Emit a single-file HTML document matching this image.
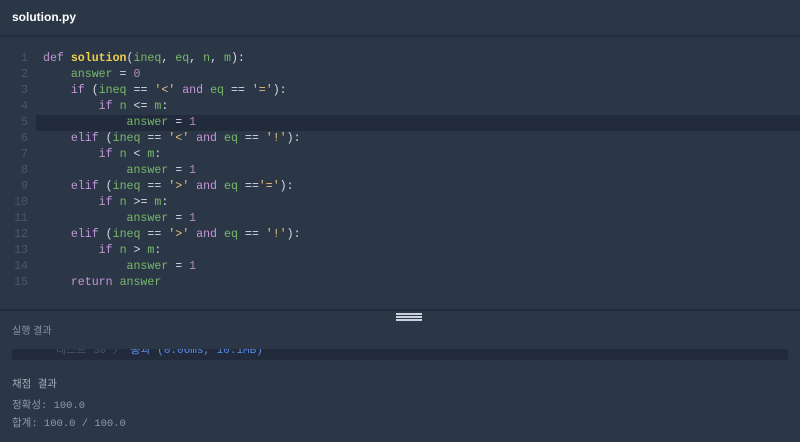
<!DOCTYPE html>
<html><head><meta charset="utf-8"><style>
body{margin:0;width:800px;height:442px;background:#2b3647;overflow:hidden;position:relative;font-family:"Liberation Mono","Noto Sans CJK KR",monospace}
.hdr{position:absolute;left:0;top:0;width:800px;height:35px;border-bottom:2px solid #222c3b;}
.hdr span{position:absolute;left:12px;top:10px;font:bold 12px "Liberation Sans",sans-serif;color:#fff}
.code{position:absolute;left:0;top:51px;width:800px;font-size:11.6px;line-height:16px;color:#d6dbe1}
.ln{display:block;height:16px;white-space:pre;position:relative}
.ln i{font-style:normal;position:absolute;left:0;width:28px;text-align:right;color:#4b5666}
.ln b{font-weight:normal;position:absolute;left:43px}
.hl{background:#222b3b;margin-left:36px}
.hl i{left:-36px}.hl b{left:7px}
.k{color:#c397d8}.f{color:#f0d04a;font-weight:bold}.v{color:#78b86a}.s{color:#e6c07b}.n{color:#b48ead}
.div{position:absolute;left:0;top:309px;width:800px;height:2px;background:#222c3b}
.grip{position:absolute;left:396px;top:313px;width:26px;height:8px;border-top:2px solid #c9d2dc;border-bottom:2px solid #c9d2dc;box-sizing:border-box}
.grip:after{content:"";position:absolute;left:0;right:0;top:1px;height:2px;background:#c9d2dc}
.rhead{position:absolute;left:12px;top:322px;font:10px "Liberation Sans","Noto Sans CJK KR",sans-serif;color:#8995a5}
.rbox{position:absolute;left:12px;top:349px;width:776px;height:11px;background:#222b3b;overflow:hidden}
.rbox span{position:absolute;left:44px;top:-8px;font-size:11px;color:#4b5666;white-space:pre}
.rbox em{font-style:normal;color:#5a8df0}
.t{position:absolute;left:12px;font-size:10.5px;color:#8e9aa8}
</style></head><body>
<div class="hdr"><span>solution.py</span></div>
<div class="code">
<span class="ln"><i>1</i><b><span class="k">def</span> <span class="f">solution</span>(<span class="v">ineq</span>, <span class="v">eq</span>, <span class="v">n</span>, <span class="v">m</span>):</b></span>
<span class="ln"><i>2</i><b>    <span class="v">answer</span> = <span class="n">0</span></b></span>
<span class="ln"><i>3</i><b>    <span class="k">if</span> (<span class="v">ineq</span> == <span class="s">'&lt;'</span> <span class="k">and</span> <span class="v">eq</span> == <span class="s">'='</span>):</b></span>
<span class="ln"><i>4</i><b>        <span class="k">if</span> <span class="v">n</span> &lt;= <span class="v">m</span>:</b></span>
<span class="ln hl"><i>5</i><b>            <span class="v">answer</span> = <span class="n">1</span></b></span>
<span class="ln"><i>6</i><b>    <span class="k">elif</span> (<span class="v">ineq</span> == <span class="s">'&lt;'</span> <span class="k">and</span> <span class="v">eq</span> == <span class="s">'!'</span>):</b></span>
<span class="ln"><i>7</i><b>        <span class="k">if</span> <span class="v">n</span> &lt; <span class="v">m</span>:</b></span>
<span class="ln"><i>8</i><b>            <span class="v">answer</span> = <span class="n">1</span></b></span>
<span class="ln"><i>9</i><b>    <span class="k">elif</span> (<span class="v">ineq</span> == <span class="s">'&gt;'</span> <span class="k">and</span> <span class="v">eq</span> ==<span class="s">'='</span>):</b></span>
<span class="ln"><i>10</i><b>        <span class="k">if</span> <span class="v">n</span> &gt;= <span class="v">m</span>:</b></span>
<span class="ln"><i>11</i><b>            <span class="v">answer</span> = <span class="n">1</span></b></span>
<span class="ln"><i>12</i><b>    <span class="k">elif</span> (<span class="v">ineq</span> == <span class="s">'&gt;'</span> <span class="k">and</span> <span class="v">eq</span> == <span class="s">'!'</span>):</b></span>
<span class="ln"><i>13</i><b>        <span class="k">if</span> <span class="v">n</span> &gt; <span class="v">m</span>:</b></span>
<span class="ln"><i>14</i><b>            <span class="v">answer</span> = <span class="n">1</span></b></span>
<span class="ln"><i>15</i><b>    <span class="k">return</span> <span class="v">answer</span></b></span>
</div>
<div class="div"></div>
<div class="grip"></div>
<div class="rhead">실행 결과</div>
<div class="rbox"><span>테스트 30 〉 <em>통과 (0.06ms, 10.1MB)</em></span></div>
<div class="t" style="top:376px;color:#a3adb9">채점 결과</div>
<div class="t" style="top:397px">정확성: 100.0</div>
<div class="t" style="top:415px">합계: 100.0 / 100.0</div>
</body></html>
